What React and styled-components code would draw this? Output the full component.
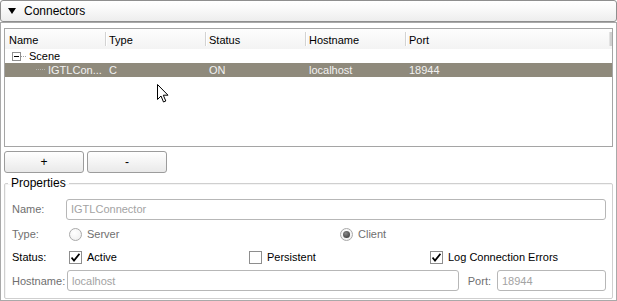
import React from "react";
import styled, { createGlobalStyle } from "styled-components";

const Global = createGlobalStyle`
  html, body { margin: 0; padding: 0; background: #fff; }
  * { box-sizing: border-box; }
`;

const Root = styled.div`
  position: relative;
  width: 617px;
  height: 301px;
  display: flex;
  flex-direction: column;
  font-family: "Liberation Sans", Arial, sans-serif;
  font-size: 11px;
  color: #000;
  background: #fff;
  overflow: hidden;
`;

const CollapseHeader = styled.div`
  height: 22px;
  flex: none;
  display: flex;
  align-items: center;
  padding-left: 7px;
  border: 1px solid #8e8e8e;
  border-radius: 3px;
  background: linear-gradient(#ffffff, #f7f7f7 50%, #ededed);
`;

const Arrow = styled.span`
  width: 0;
  height: 0;
  border-left: 4px solid transparent;
  border-right: 4px solid transparent;
  border-top: 6px solid #000;
  margin-right: 8px;
  margin-top: 0px;
`;

const HeaderTitle = styled.span`
  font-size: 12px;
`;

const Panel = styled.div`
  flex: 1;
  display: flex;
  flex-direction: column;
  border: 1px solid #a9a9a9;
  padding: 5px 3px 1px 3px;
`;

const Table = styled.div`
  height: 119px;
  flex: none;
  border: 1px solid #a5a5a5;
  display: flex;
  flex-direction: column;
  background: #fff;
`;

const HeaderRow = styled.div`
  display: flex;
  height: 20px;
  background: linear-gradient(#fdfdfd, #f3f3f3);
`;

const HeadCell = styled.div`
  position: relative;
  width: ${(p) => (p.$grow ? "auto" : "100px")};
  flex: ${(p) => (p.$grow ? "1" : "none")};
  padding: 5px 0 0 4px;
  font-size: 11px;
  &::before {
    content: "";
    display: ${(p) => (p.$first ? "none" : "block")};
    position: absolute;
    left: 0;
    top: 3px;
    bottom: 3px;
    width: 1px;
    background: #d3d3d3;
    box-shadow: 1px 0 0 #fff;
  }
`;

const HeadEnd = styled.div`
  width: 3px;
  flex: none;
  margin: 3px 0;
  background: #cfcfcf;
  border-left: 1px solid #e2e2e2;
`;

const Row = styled.div`
  display: flex;
  height: 14px;
  align-items: center;
  font-size: 11px;
  background: ${(p) => (p.$selected ? "#8f8a7c" : "transparent")};
  color: ${(p) => (p.$selected ? "#f2f2f2" : "#000")};
`;

const Cell = styled.div`
  width: ${(p) => (p.$grow ? "auto" : "100px")};
  flex: ${(p) => (p.$grow ? "1" : "none")};
  padding-left: ${(p) => p.$indent || 4}px;
  display: flex;
  align-items: center;
  white-space: nowrap;
  overflow: hidden;
`;

const ButtonRow = styled.div`
  display: flex;
  gap: 3px;
  margin-top: 4px;
  flex: none;
`;

const PushButton = styled.button`
  width: 80px;
  height: 22px;
  padding: 0;
  border: 1px solid #9c9c9c;
  border-radius: 3px;
  background: linear-gradient(#ffffff, #f4f4f4 50%, #e9e9e9);
  font-family: "Liberation Sans", Arial, sans-serif;
  font-size: 12px;
  color: #000;
`;

const GroupBox = styled.fieldset`
  margin: 4px 0 0 0;
  height: 122px;
  flex: none;
  border: 1px solid #cfcfcf;
  box-shadow: inset 1px 1px 0 #f4f4f4;
  border-radius: 2px;
  padding: 7px 6px 3px 7px;
  min-width: 0;
`;

const Legend = styled.legend`
  padding: 0 3px;
  margin-left: -4px;
  font-size: 12px;
  line-height: 13px;
`;

const Form = styled.div`
  display: grid;
  grid-template-columns: 54px 1fr;
  grid-template-rows: 24px 26px 20px 27px;
  align-items: center;
`;

const Label = styled.span`
  color: ${(p) => (p.$disabled ? "#6f6f6f" : "#000")};
  font-size: 11px;
  white-space: nowrap;
`;

const TextInput = styled.div`
  height: 21px;
  border: 1px solid #b7b7b7;
  border-radius: 3px;
  background: #fff;
  color: #a3a3a3;
  font-size: 11px;
  padding-left: 4px;
  display: flex;
  align-items: center;
  width: ${(p) => (p.$width ? p.$width + "px" : "auto")};
  flex: ${(p) => (p.$width ? "none" : "1")};
`;

const Options = styled.div`
  display: grid;
  grid-template-columns: repeat(${(p) => p.$cols}, 1fr);
  align-items: center;
`;

const Option = styled.div`
  display: flex;
  align-items: center;
  gap: 5px;
  padding-left: ${(p) => p.$offset}px;
  font-size: 11px;
  color: ${(p) => (p.$disabled ? "#6f6f6f" : "#000")};
`;

const Radio = styled.span`
  width: 13px;
  height: 13px;
  border-radius: 50%;
  border: 1px solid #a9a9a9;
  background: radial-gradient(circle at 40% 35%, #ffffff, #ececec);
  display: flex;
  align-items: center;
  justify-content: center;
  &::after {
    content: "";
    display: ${(p) => (p.$checked ? "block" : "none")};
    width: 7px;
    height: 7px;
    border-radius: 50%;
    background: radial-gradient(circle at 40% 35%, #8a8a8a, #2e2e2e);
  }
`;

const Box = styled.span`
  width: 13px;
  height: 13px;
  border: 1px solid #8e8e8e;
  background: #fff;
  display: flex;
  align-items: center;
  justify-content: center;
`;

const HostRow = styled.div`
  grid-column: 1 / span 2;
  display: flex;
  align-items: center;
`;

const HostLabel = styled(Label)`
  width: 55px;
  flex: none;
`;

const PortLabel = styled(Label)`
  margin: 0 6px 0 9px;
`;

const Cursor = styled.svg`
  position: absolute;
  left: 157px;
  top: 84px;
`;

const Check = () => (
  <svg width="9" height="9" viewBox="0 0 9 9">
    <path d="M0.5 4.5 L3 7.5 L8.5 0.8" fill="none" stroke="#000" strokeWidth="1.8" />
  </svg>
);

const Checkbox = ({ checked, label, offset }) => (
  <Option $offset={offset}>
    <Box>{checked && <Check />}</Box>
    {label}
  </Option>
);

const Expander = () => (
  <svg width="16" height="9" viewBox="0 0 16 9">
    <rect x="0.5" y="0.5" width="8" height="8" fill="#fff" stroke="#8f8f8f" />
    <line x1="2" y1="4.5" x2="7" y2="4.5" stroke="#000" />
    <line x1="9" y1="4.5" x2="15" y2="4.5" stroke="#a0a0a0" strokeDasharray="1 1" />
  </svg>
);

const ChildLine = () => (
  <svg width="12" height="14" viewBox="0 0 12 14">
    <line x1="0" y1="6.5" x2="10" y2="6.5" stroke="#b5b5b0" strokeDasharray="1 1" />
  </svg>
);

const columns = ["Name", "Type", "Status", "Hostname", "Port"];

export default function App() {
  return (
    <Root>
      <Global />
      <CollapseHeader>
        <Arrow />
        <HeaderTitle>Connectors</HeaderTitle>
      </CollapseHeader>
      <Panel>
        <Table>
          <HeaderRow>
            {columns.map((c, i) => (
              <HeadCell key={c} $first={i === 0} $grow={i === columns.length - 1}>
                {c}
              </HeadCell>
            ))}
            <HeadEnd />
          </HeaderRow>
          <Row>
            <Cell $indent={7}>
              <Expander />
              <span style={{ marginLeft: 1 }}>Scene</span>
            </Cell>
          </Row>
          <Row $selected>
            <Cell $indent={31}>
              <ChildLine />
              <span>IGTLCon...</span>
            </Cell>
            <Cell>C</Cell>
            <Cell>ON</Cell>
            <Cell>localhost</Cell>
            <Cell $grow>18944</Cell>
          </Row>
        </Table>
        <ButtonRow>
          <PushButton>+</PushButton>
          <PushButton>-</PushButton>
        </ButtonRow>
        <GroupBox>
          <Legend>Properties</Legend>
          <Form>
            <Label $disabled>Name:</Label>
            <TextInput>IGTLConnector</TextInput>

            <Label $disabled>Type:</Label>
            <Options $cols={2}>
              <Option $offset={3} $disabled>
                <Radio />
                Server
              </Option>
              <Option $offset={4} $disabled>
                <Radio $checked />
                Client
              </Option>
            </Options>

            <Label>Status:</Label>
            <Options $cols={3}>
              <Checkbox checked label="Active" offset={3} />
              <Checkbox label="Persistent" offset={3} />
              <Checkbox checked label="Log Connection Errors" offset={4} />
            </Options>

            <HostRow>
              <HostLabel $disabled>Hostname:</HostLabel>
              <TextInput>localhost</TextInput>
              <PortLabel $disabled>Port:</PortLabel>
              <TextInput $width={109}>18944</TextInput>
            </HostRow>
          </Form>
        </GroupBox>
      </Panel>
      <Cursor width="13" height="20" viewBox="0 0 13 20">
        <path
          d="M0.5 0.5 L0.5 15.5 L4 12 L6.5 18 L8.8 17 L6.3 11.2 L11 11.2 Z"
          fill="#fff"
          stroke="#000"
          strokeWidth="1"
        />
      </Cursor>
    </Root>
  );
}
